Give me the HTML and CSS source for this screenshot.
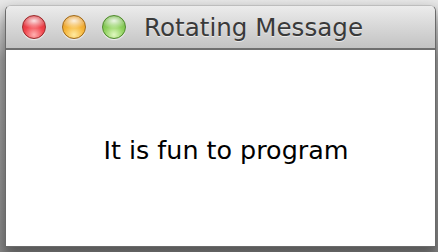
FILE: index.html
```html
<!DOCTYPE html>
<html lang="en">
<head>
    <meta charset="UTF-8">
    <title>Rotating Message</title>
    <link rel="stylesheet" href="styles.css">
</head>
<body>
    <div class="window">
        <!-- Title bar -->
        <div class="titlebar">
            <div class="lights">
                <span class="light red"></span>
                <span class="light yellow"></span>
                <span class="light green"></span>
            </div>
            <div class="title">Rotating Message</div>
        </div>

        <!-- Content -->
        <div class="content">
            <p class="message">It is fun to program</p>
        </div>
    </div>
</body>
</html>
```

FILE: styles.css
```css
html, body {
    margin: 0;
    height: 100%;
}
body {
    background: linear-gradient(#e8e8e8 0, #e0e0e0 20px, #a8a8a8 60px, #8f8f8f 252px);
    font-family: "DejaVu Sans", Verdana, sans-serif;
    padding: 5px 3px 0 5px;
    box-sizing: border-box;
    overflow: hidden;
}
.window {
    width: 431px;
    height: 242px;
    display: flex;
    flex-direction: column;
    border: 1px solid #6a6a6a;
    border-top-color: #bdbdbd;
    border-radius: 6px 6px 0 0;
    box-sizing: border-box;
    box-shadow: 0 8px 14px 2px rgba(0, 0, 0, 0.4);
    overflow: hidden;
}
.titlebar {
    height: 42px;
    flex: none;
    display: flex;
    align-items: center;
    background: linear-gradient(#ececec, #d9d9d9 45%, #c3c3c3);
    border-bottom: 2px solid #6f6f6f;
}
.lights {
    display: flex;
    gap: 16px;
    padding-left: 16px;
}
.light {
    width: 24px;
    height: 24px;
    border-radius: 50%;
    box-sizing: border-box;
    box-shadow: 0 1px 1px rgba(255, 255, 255, 0.7);
}
.red {
    border: 1px solid #9b2a2a;
    background:
        radial-gradient(ellipse 60% 35% at 50% 22%, rgba(255,255,255,0.85), rgba(255,255,255,0) 100%),
        radial-gradient(circle at 50% 85%, #ffb0b0 0%, #f0434b 45%, #c9222c 100%);
}
.yellow {
    border: 1px solid #a06a17;
    background:
        radial-gradient(ellipse 60% 35% at 50% 22%, rgba(255,255,255,0.85), rgba(255,255,255,0) 100%),
        radial-gradient(circle at 50% 85%, #ffeaa0 0%, #f5b53a 45%, #d8861b 100%);
}
.green {
    border: 1px solid #4f8a2c;
    background:
        radial-gradient(ellipse 60% 35% at 50% 22%, rgba(255,255,255,0.85), rgba(255,255,255,0) 100%),
        radial-gradient(circle at 50% 85%, #e0f8c0 0%, #8fd15e 45%, #5ea635 100%);
}
.title {
    margin-left: 18px;
    font-size: 24.6px;
    color: #3a3a3a;
    text-shadow: 0 1px 0 rgba(255, 255, 255, 0.6);
}
.content {
    flex: 1;
    background: #fff;
    display: flex;
    align-items: center;
    justify-content: center;
}
.message {
    margin: 4px 0 0 11px;
    font-size: 25.4px;
    color: #000;
}
```
